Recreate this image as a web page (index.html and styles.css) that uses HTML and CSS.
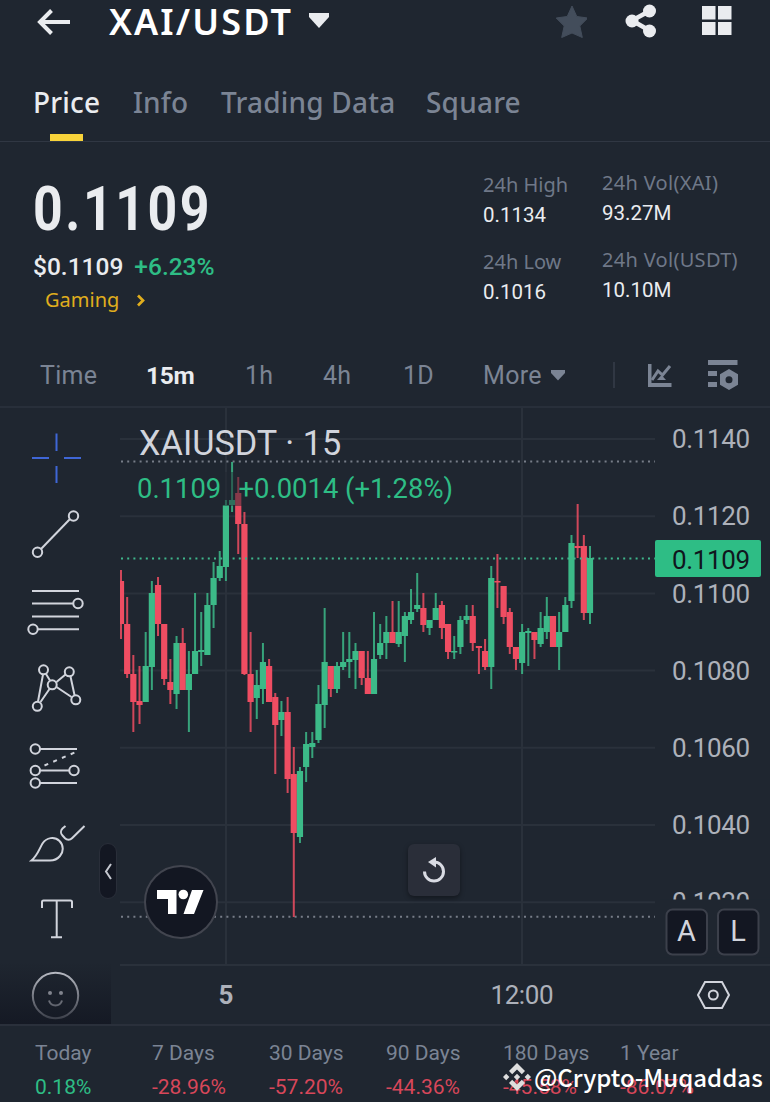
FILE: index.html
```html
<!DOCTYPE html>
<html lang="en">
<head>
    <meta charset="UTF-8">
    <meta name="viewport" content="width=device-width, initial-scale=1.0">
    <title>XAI/USDT - Price</title>
    <link rel="stylesheet" href="styles.css">
</head>
<body>

    <!-- Header -->
    <header class="header">
        <svg class="back" width="34" height="28" viewBox="37 7 34 28"><path d="M70 21H40M51.500 9.500L40 21l11.500 11.500" fill="none" stroke="#eaecef" stroke-width="4"/></svg>
        <h1 class="pair">XAI/USDT</h1>
        <svg class="caret" width="22" height="16" viewBox="0 0 22 16"><path d="M1 0h20v4l-10 11L1 4z" fill="#eaecef"/></svg>
        <div class="header-icons">
            <svg width="32" height="34" viewBox="555 4 32 34"><path d="M572 6l4.800 10.500 11 1.500-8 8 2.500 11.500-10.300-4.500-10.300 4.500 2.500-11.500-8-8 11-1.500z" fill="#434d5b" stroke="#434d5b" stroke-linejoin="round"/></svg>
            <svg width="32" height="34" viewBox="625 4 32 34"><path d="M649.500 11L632 20.500l17.500 10" fill="none" stroke="#eaecef" stroke-width="4.500"/><circle cx="649.500" cy="11" r="6.500" fill="#eaecef"/><circle cx="632" cy="21" r="6.500" fill="#eaecef"/><circle cx="649.500" cy="31" r="6.500" fill="#eaecef"/></svg>
            <svg width="30" height="30" viewBox="0 0 30 30"><path d="M0 0h13.500v13.500H0zM16 0h13.500v13.500H16zM0 16h13.500v13H0zM16 16h13.500v13H16z" fill="#eaecef"/></svg>
        </div>
    </header>

    <!-- Tabs -->
    <nav class="tabs">
        <a class="tab active">Price</a>
        <a class="tab">Info</a>
        <a class="tab">Trading Data</a>
        <a class="tab">Square</a>
    </nav>

    <!-- Price Summary -->
    <section class="summary">
        <div class="price-box">
            <div class="price">0.1109</div>
            <div class="sub-price"><span>$0.1109</span><span class="up">+6.23%</span></div>
            <div class="tag">Gaming <svg width="10" height="13" viewBox="0 0 10 13"><path d="M2 1.500l5 5-5 5" fill="none" stroke="#e0ae1d" stroke-width="2.700"/></svg></div>
        </div>
        <div class="stats">
            <div class="label">24h High</div>
            <div class="value">0.1134</div>
            <div class="label">24h Low</div>
            <div class="value">0.1016</div>
        </div>
        <div class="stats stats-vol">
            <div class="label">24h Vol(XAI)</div>
            <div class="value">93.27M</div>
            <div class="label">24h Vol(USDT)</div>
            <div class="value">10.10M</div>
        </div>
    </section>

    <!-- Intervals -->
    <section class="intervals">
        <span>Time</span>
        <span class="active">15m</span>
        <span>1h</span>
        <span>4h</span>
        <span>1D</span>
        <span class="more">More <svg width="14" height="11" viewBox="0 0 14 11"><path d="M0 0h14v3l-7 7.500L0 3z" fill="#7b8494"/></svg></span>
        <i class="divider"></i>
        <svg width="24" height="25" viewBox="648 361 24 25"><path d="M649.500 362v21h22" fill="none" stroke="#7b8494" stroke-width="4"/><path d="M652 378l6-9 4.500 4 7.500-9" fill="none" stroke="#7b8494" stroke-width="3"/><path d="M657 378l4.500-5 4.500 5z" fill="#7b8494"/></svg>
        <svg width="31" height="32" viewBox="708 359 31 32"><path d="M708 360h29.500v5H708zM708 371h9v5h-9zM708 382h9v5h-9z" fill="#7b8494"/><path d="M729 369l9 5.300v10.400l-9 5.300-9-5.300v-10.400zM729 376.200a3.500 3.500 0 1 0 0 7 3.500 3.500 0 1 0 0-7z" fill="#7b8494" fill-rule="evenodd"/></svg>
    </section>

    <!-- Chart -->
    <main class="chart">
        <div class="tools">
            <svg width="80" height="77" viewBox="16 420 80 77"><path d="M32 458h17M64 458h17M56.500 433.500V451M56.500 466v17" stroke="#3f66d6" stroke-width="2"/></svg>
            <svg width="80" height="77" viewBox="16 497 80 77"><path d="M41 549l29-30"/><circle cx="37.500" cy="552.300" r="4.700"/><circle cx="73.500" cy="516" r="4.700"/></svg>
            <svg width="80" height="77" viewBox="16 574 80 77"><path d="M32 591h47M32 603.500h41M32 616.500h47M38 629.300h41"/><circle cx="78" cy="603.500" r="4.700"/><circle cx="33" cy="629.300" r="4.700"/></svg>
            <svg width="80" height="77" viewBox="16 651 80 77"><path d="M38 701.500l5-27M46 674l4 6.500M40.500 702l9-13M56.500 682l9-7.500M56.500 687l15 10M70.500 676.500l4 18.500"/><circle cx="43.500" cy="669.800" r="4.500"/><circle cx="52.200" cy="684.800" r="4.500"/><circle cx="69.300" cy="671.800" r="4.500"/><circle cx="75.800" cy="699.800" r="4.500"/><circle cx="37.300" cy="706.300" r="4.500"/></svg>
            <svg width="80" height="77" viewBox="16 728 80 77"><path d="M40 749h37M40 770.500h29M40 783h37"/><path d="M44.500 765.500L76 752" stroke-dasharray="4 5.500"/><circle cx="35.300" cy="749" r="4.700"/><circle cx="35.300" cy="770.500" r="4.700"/><circle cx="35.300" cy="783" r="4.700"/><circle cx="74" cy="770.500" r="4.700"/></svg>
            <svg width="80" height="77" viewBox="16 805 80 77"><path d="M31.500 860.500c6-5 8-12 11-17 4-6 12-7.500 17-2.500 4.500 4.500 4 11 .5 15-2.500 3-6 4.500-10 4.500z"/><path d="M65.500 826l-3 2.500c-2 2-2 5 0 7l2.500 2.700c2 2 5 2 7 0L84.500 826"/></svg>
            <svg width="80" height="77" viewBox="16 882 80 77"><path d="M42 908v-6q0-1.500 1.500-1.500h27q1.500 0 1.500 1.500v6M56.700 901v36M51 937.300h11"/></svg>
            <svg width="80" height="77" viewBox="16 959 80 77"><circle cx="55.500" cy="995.500" r="22.700"/><circle cx="50" cy="993" r="2" class="eye"/><circle cx="61" cy="993" r="2" class="eye"/><path d="M49 1000.500q1.500 5 6.500 5t6.500-5"/></svg>
            <div class="tools-fade"></div>
        </div>

        <svg id="plot" class="plot" width="650" height="616" viewBox="120 408 650 616">
            <defs><clipPath id="pane"><rect x="120" y="408" width="535" height="556"/></clipPath></defs>
            <g id="grid" class="grid"></g>
            <path class="dots" d="M121 461.500H655M121 916.800H655"/>
            <g id="candles" clip-path="url(#pane)"></g>
            <path class="last" d="M121 558.500H655"/>
            <g id="labels" class="axis"></g>
            <rect x="655" y="540" width="106" height="37" rx="2" fill="#2ebd85"/>
            <text class="axis-last" x="672" y="568.500" textLength="78">0.1109</text>
            <rect x="660" y="899.500" width="110" height="58" fill="#1f2630"/>
            <g class="key">
                <rect x="666.500" y="909.500" width="40.500" height="45" rx="6"/><text x="686.500" y="941">A</text>
                <rect x="718" y="909.500" width="40.500" height="45" rx="6"/><text x="738" y="941">L</text>
            </g>
            <text class="time bold" x="226" y="1004">5</text>
            <text class="time" x="522" y="1004" textLength="63">12:00</text>
            <g fill="none" stroke="#d1d4dc" stroke-width="2"><path d="M705 982h17l7 13-7 13h-17l-7-13z"/><circle cx="713.300" cy="995" r="4.500"/></g>
        </svg>

        <div class="legend">
            <div class="symbol">XAIUSDT · 15</div>
            <div class="change"><span>0.1109</span><span>+0.0014 (+1.28%)</span></div>
        </div>
        <div class="collapse"><svg width="9" height="17" viewBox="0 0 9 17"><path d="M7 1L2 8.500 7 16" fill="none" stroke="#c5c8d0" stroke-width="2"/></svg></div>
        <div class="tv-logo"><svg width="48" height="26" viewBox="0 0 48 26"><path d="M0 1h19.500v24H11V10H0zM35 1h11.500L37 25H26.500z" fill="#fff"/><circle cx="26.300" cy="5.500" r="4.800" fill="#fff"/></svg></div>
        <button class="reset"><svg width="28" height="30" viewBox="420 855 28 30"><path d="M424.500 871.500a9.500 9.500 0 1 0 9.500-9.500" fill="none" stroke="#d9dbe3" stroke-width="3"/><path d="M428 862l8-5v10.500z" fill="#d9dbe3"/></svg></button>
    </main>

    <!-- Performance -->
    <footer class="performance">
        <div>Today<b class="up">0.18%</b></div>
        <div>7 Days<b>-28.96%</b></div>
        <div>30 Days<b>-57.20%</b></div>
        <div>90 Days<b>-44.36%</b></div>
        <div>180 Days<b>-45.58%</b></div>
        <div>1 Year<b>-86.07%</b></div>
        <div class="watermark">
            <svg width="28" height="28" viewBox="0 0 28 28"><path d="M14 0l8 8-3.200 3.200L14 6.400l-4.800 4.800L6 8zM14 28l8-8-3.200-3.200L14 21.600l-4.800-4.800L6 20zM3.200 10.800L6.400 14l-3.200 3.200L0 14zM24.800 10.800L28 14l-3.200 3.200-3.200-3.200zM14 10.800l3.200 3.200-3.200 3.200-3.200-3.200z" fill="#dedede"/></svg>
            <span>@Crypto-Muqaddas</span>
        </div>
    </footer>

    <script src="chart.js"></script>
</body>
</html>
```
FILE: styles.css
```css
/* General Styling */
* {
    box-sizing: border-box;
}

body {
    width: 770px;
    height: 1102px;
    margin: 0;
    overflow: hidden;
    background-color: #1f2630;
    color: #eaecef;
    font-family: Roboto, "Noto Sans", sans-serif;
}

.up {
    color: #2ebd85;
}

svg {
    display: block;
    flex: none;
}

/* Header */
.header {
    display: flex;
    align-items: center;
    height: 64px;
    padding: 0 38px 20px 37px;
}

.pair {
    width: 186px;
    margin: 0 0 0 38px;
    font: 600 36px/44px "Noto Sans", sans-serif;
    letter-spacing: 2.1px;
    color: #fff;
    white-space: nowrap;
}

.caret {
    margin: -2px 0 0 13px;
}

.header-icons {
    display: flex;
    align-items: center;
    gap: 38px;
    margin: -2px 0 0 auto;
}

.header-icons svg:last-child {
    margin-left: 7px;
}

/* Tabs */
.tabs {
    display: grid;
    grid-template-columns: 67px 55px 172px 97px;
    column-gap: 33px;
    height: 78px;
    padding-left: 33px;
    border-bottom: 1px solid #303743;
    font: 500 28px/77px "Noto Sans", sans-serif;
    letter-spacing: 0.2px;
    color: #7b8494;
    white-space: nowrap;
}

.tab.active {
    color: #eaecef;
    background: linear-gradient(#f8d33a, #f8d33a) 17px 100% / 33px 7px no-repeat;
}

/* Price Summary */
.summary {
    display: flex;
    height: 204px;
    padding: 28px 0 0 33px;
}

.price-box {
    width: 450px;
}

.price {
    height: 78px;
    font-size: 61px;
    font-weight: 700;
    line-height: 78px;
    letter-spacing: 3px;
    transform: scaleX(0.85);
    transform-origin: 0 50%;
}

.sub-price {
    display: flex;
    gap: 11px;
    font-size: 24.5px;
    font-weight: 500;
    line-height: 38px;
}

.tag {
    display: flex;
    align-items: center;
    gap: 17px;
    margin-left: 12px;
    font: 20px/28px "Noto Sans", sans-serif;
    color: #e0ae1d;
}

.stats {
    width: 119px;
    font-size: 20.5px;
    line-height: 30px;
    white-space: nowrap;
}

.stats-vol {
    margin-top: -2px;
}

.label {
    font-family: "Noto Sans", sans-serif;
    font-size: 20px;
    color: #6f7888;
}

.stats-vol .label {
    letter-spacing: 0.3px;
}

.value {
    margin-bottom: 17px;
}

/* Intervals */
.intervals {
    display: grid;
    grid-template-columns: 106px 99px 78px 80px 80px 130px 35px 60px 31px;
    align-items: center;
    height: 62px;
    padding: 0 0 2px 40px;
    border-bottom: 2px solid #282f3a;
    font-size: 25px;
    color: #7b8494;
    letter-spacing: 0.3px;
}

.intervals .active {
    color: #eaecef;
    font-size: 24.5px;
    font-weight: 700;
    letter-spacing: -0.3px;
}

.more {
    display: flex;
    align-items: center;
    gap: 9px;
}

.divider {
    width: 2px;
    height: 26px;
    background: #303743;
}

/* Chart */
.chart {
    position: relative;
    display: flex;
    height: 616px;
}

.tools {
    width: 120px;
    padding: 12px 0 0 16px;
    overflow: hidden;
    fill: none;
    stroke: #d1d4dc;
    stroke-width: 2;
}

.tools .eye {
    fill: #d1d4dc;
    stroke: none;
}

.tools-fade {
    position: absolute;
    left: 0;
    bottom: 0;
    width: 111px;
    height: 62px;
    background: linear-gradient(rgba(19, 23, 34, 0), rgba(19, 23, 34, 0.85));
}

.grid {
    stroke: #2a313b;
    stroke-width: 2;
}

.dots,
.last {
    stroke: #777d88;
    stroke-width: 2;
    stroke-dasharray: 2 4.2;
}

.last {
    stroke: #3fb68b;
}

.rise {
    fill: #3cba88;
}

.fall {
    fill: #ef4d62;
}

.wick {
    opacity: 0.85;
}

.axis,
.axis-last,
.time {
    font-size: 26px;
    fill: #adb1ba;
}

.axis-last {
    fill: #10161d;
}

.time {
    text-anchor: middle;
}

.bold {
    font-weight: 700;
}

.key rect {
    fill: #131722;
    stroke: #3c404b;
    stroke-width: 2;
}

.key text {
    font-size: 29px;
    fill: #d1d4dc;
    text-anchor: middle;
}

.legend {
    position: absolute;
    left: 137px;
    top: 14px;
    white-space: nowrap;
}

.symbol {
    padding-left: 2px;
    font-size: 34.3px;
    line-height: 42px;
    color: #d1d4dc;
}

.change {
    display: flex;
    justify-content: space-between;
    margin-top: 8px;
    width: 316px;
    font-size: 27.4px;
    line-height: 34px;
    color: #2ebd85;
    background: rgba(31, 38, 48, 0.5);
}

.collapse,
.tv-logo,
.reset {
    position: absolute;
    display: flex;
    align-items: center;
    justify-content: center;
}

.collapse {
    left: 99px;
    top: 435px;
    width: 18px;
    height: 56px;
    border: 1px solid #292e39;
    border-radius: 9px;
    background: #131722;
}

.tv-logo {
    left: 144px;
    top: 457px;
    width: 74px;
    height: 74px;
    border: 2px solid #42454f;
    border-radius: 50%;
    background: #131722;
}

.reset {
    left: 408px;
    top: 436px;
    width: 52px;
    height: 52px;
    padding: 0;
    border: 0;
    border-radius: 6px;
    background: #2a2e39;
    box-shadow: 0 2px 5px rgba(0, 0, 0, 0.4);
}

/* Performance */
.performance {
    position: relative;
    display: grid;
    grid-template-columns: repeat(5, 117px) 110px;
    height: 78px;
    padding: 10px 0 0 35px;
    border-top: 2px solid #2a303b;
    font-size: 21px;
    line-height: 34px;
    color: #7b8494;
    white-space: nowrap;
}

.performance b {
    display: block;
    font-weight: 400;
    color: #d8475a;
}

.performance b.up {
    color: #2ebd85;
}

.watermark {
    position: absolute;
    left: 503px;
    top: 36px;
    display: flex;
    align-items: center;
    gap: 3px;
    font: 500 24px/30px "Noto Sans CJK SC", sans-serif;
    color: #fff;
}
```
FILE: chart.js
```js
// [high, body top, body bottom, low, rising]
const candles = [
    [570, 581, 624, 639, 0], [597, 624, 674, 678, 0], [655, 674, 702, 732, 0], [666, 701, 705, 724, 0],
    [632, 666, 702, 702, 1], [581, 593, 667, 690, 1], [577, 585, 624, 636, 0], [624, 624, 679, 685, 0],
    [659, 682, 690, 704, 0], [636, 643, 694, 709, 1], [628, 643, 690, 690, 0], [651, 674, 690, 732, 1],
    [593, 651, 674, 674, 1], [612, 650, 652, 666, 1], [593, 605, 655, 655, 1], [562, 578, 605, 628, 1],
    [551, 566, 578, 581, 1], [500, 505, 567, 581, 1], [462, 500, 505, 512, 1], [477, 493, 524, 554, 0],
    [512, 524, 674, 675, 0], [632, 674, 702, 732, 0], [670, 685, 698, 719, 1], [643, 662, 689, 704, 1],
    [659, 666, 702, 702, 0], [693, 697, 725, 774, 0], [701, 712, 720, 736, 1], [697, 712, 779, 793, 0],
    [747, 774, 833, 917, 0], [767, 771, 837, 843, 1], [732, 744, 767, 782, 1], [732, 743, 747, 758, 1],
    [685, 704, 740, 743, 1], [608, 662, 705, 728, 1], [666, 666, 689, 697, 0], [662, 666, 689, 693, 1],
    [632, 662, 667, 670, 1], [632, 659, 662, 678, 1], [643, 651, 660, 689, 1], [651, 651, 678, 685, 0],
    [651, 678, 694, 694, 0], [612, 659, 694, 694, 1], [624, 643, 655, 659, 1], [616, 632, 643, 659, 1],
    [601, 632, 643, 643, 0], [601, 632, 644, 647, 1], [612, 616, 636, 662, 1], [589, 612, 620, 624, 1],
    [573, 605, 609, 612, 1], [593, 608, 625, 632, 0], [620, 620, 628, 635, 1], [593, 608, 620, 620, 1],
    [601, 605, 628, 639, 0], [624, 624, 652, 659, 0], [636, 651, 652, 659, 1], [616, 620, 647, 654, 1],
    [605, 616, 620, 624, 1], [605, 616, 643, 651, 0], [647, 646, 648, 674, 0], [639, 651, 667, 670, 0],
    [566, 578, 667, 689, 1], [554, 581, 582, 608, 0], [586, 586, 617, 624, 0], [608, 612, 647, 654, 0],
    [647, 647, 659, 670, 0], [624, 632, 663, 674, 1], [628, 631, 633, 666, 1], [632, 632, 640, 659, 0],
    [612, 628, 644, 647, 1], [597, 616, 632, 639, 1], [616, 616, 647, 647, 0], [612, 632, 647, 670, 1],
    [597, 605, 632, 632, 1], [535, 543, 601, 608, 1], [504, 546, 548, 558, 0], [535, 546, 613, 620, 0],
    [546, 558, 613, 624, 1]
];

const step = 6.171;
let bars = '';
candles.forEach(([high, top, bottom, low, rising], i) => {
    const x = 121 + i * step;
    const cls = rising ? 'rise' : 'fall';
    bars += `<rect class="${cls} wick" x="${x - 1}" y="${high}" width="2" height="${low - high}"/>`;
    bars += `<rect class="${cls}" x="${x - 3.1}" y="${top}" width="6.2" height="${Math.max(bottom - top, 1.5)}"/>`;
});
document.getElementById('candles').innerHTML = bars;

// Grid lines and price labels
const prices = ['0.1140', '0.1120', '0.1100', '0.1080', '0.1060', '0.1040', '0.1020'];
let lines = '<path d="M226 408V964M522 408V964M120 965H770"/>';
let labels = '';
prices.forEach((price, i) => {
    const y = 439 + i * 77.2;
    lines += `<path d="M120 ${y}H655"/>`;
    labels += `<text x="672" y="${y + 9.2}" textLength="78">${price}</text>`;
});
document.getElementById('grid').innerHTML = lines;
document.getElementById('labels').innerHTML = labels;
```
